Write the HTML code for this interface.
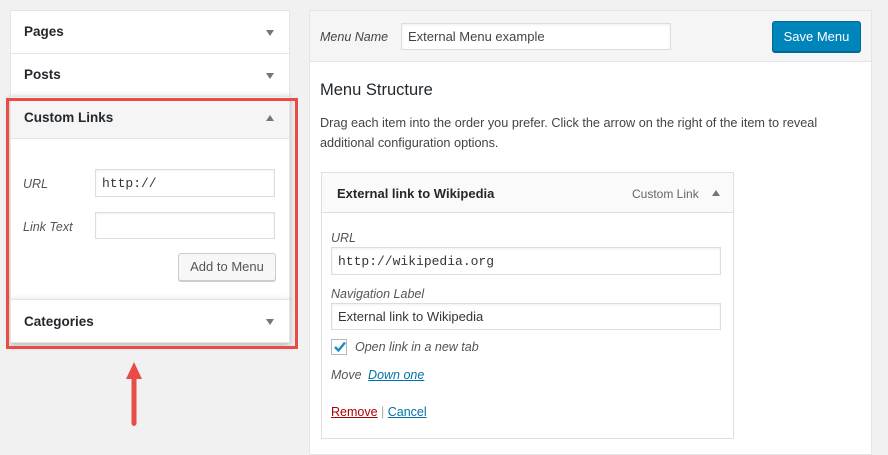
<!DOCTYPE html>
<html><head><meta charset="utf-8"><style>
*{box-sizing:border-box;margin:0;padding:0}
body{width:888px;height:445px;background:#f1f1f1;font-family:"Liberation Sans",sans-serif;color:#23282d;position:relative;overflow:hidden}
.a{position:absolute}
.box{background:#fff;border:1px solid #e5e5e5}
.h{font-size:13.5px;font-weight:bold;color:#23282d}
.tri{position:absolute;width:0;height:0;border-left:4px solid transparent;border-right:4px solid transparent}
.down{border-top:6px solid #72777c}
.up{border-bottom:6px solid #72777c}
.inp{position:absolute;background:#fff;border:1px solid #ddd;box-shadow:inset 0 1px 2px rgba(0,0,0,.07);font-size:13px;padding:0 6px;display:flex;align-items:center;color:#32373c}
.lbl{position:absolute;font-size:12.5px;font-style:italic;color:#555}
.mono{font-family:"Liberation Mono",monospace;font-size:13px}
</style></head><body>
<div class="a box" style="left:10px;top:10px;width:280px;height:44px"></div>
<div class="a h" style="left:24px;top:24px">Pages</div><div class="tri down" style="left:266px;top:30px"></div>
<div class="a box" style="left:10px;top:53px;width:280px;height:44px"></div>
<div class="a h" style="left:24px;top:67px">Posts</div><div class="tri down" style="left:266px;top:73px"></div>
<div class="a box" style="left:10px;top:96px;width:280px;height:205px;box-shadow:0 1px 6px rgba(0,0,0,.25)"></div>
<div class="a" style="left:11px;top:97px;width:278px;height:42px;background:#f5f5f5;border-bottom:1px solid #e5e5e5"></div>
<div class="a h" style="left:24px;top:110px">Custom Links</div><div class="tri up" style="left:266px;top:115px"></div>
<div class="lbl" style="left:23px;top:177px">URL</div>
<div class="inp mono" style="left:95px;top:169px;width:180px;height:28px">http://</div>
<div class="lbl" style="left:23px;top:220px">Link Text</div>
<div class="inp" style="left:95px;top:212px;width:180px;height:27px"></div>
<div class="a" style="left:178px;top:253px;width:98px;height:28px;background:#f7f7f7;border:1px solid #ccc;border-radius:3px;box-shadow:0 1px 0 #ccc;font-size:13px;color:#555;text-align:center;line-height:26px">Add to Menu</div>
<div class="a box" style="left:10px;top:299px;width:280px;height:44px;box-shadow:0 2px 6px rgba(0,0,0,.25)"></div>
<div class="a h" style="left:24px;top:314px">Categories</div><div class="tri down" style="left:266px;top:319px"></div>
<div class="a" style="left:6px;top:98px;width:292px;height:251px;border:3px solid #e94c47"></div>
<svg class="a" style="left:120px;top:358px" width="28" height="72"><path d="M14 4 L22 21 L16.5 21 L16.5 66 Q14 70 11.5 66 L11.5 21 L6 21 Z" fill="#e94c47"/></svg>
<div class="a box" style="left:309px;top:10px;width:563px;height:445px"></div>
<div class="a" style="left:310px;top:11px;width:561px;height:51px;background:#f5f5f5;border-bottom:1px solid #e5e5e5"></div>
<div class="lbl" style="left:320px;top:30px;color:#444">Menu Name</div>
<div class="inp" style="left:401px;top:23px;width:270px;height:27px;color:#444">External Menu example</div>
<div class="a" style="left:772px;top:21px;width:89px;height:31px;background:#0085ba;border:1px solid #006799;border-radius:3px;box-shadow:0 1px 0 #006799;color:#fff;font-size:13px;text-align:center;line-height:29px">Save Menu</div>
<div class="a" style="left:320px;top:81px;font-size:16.5px;color:#23282d">Menu Structure</div>
<div class="a" style="left:320px;top:114px;font-size:12.7px;line-height:19.5px;color:#444;width:540px">Drag each item into the order you prefer. Click the arrow on the right of the item to reveal additional configuration options.</div>
<div class="a box" style="left:321px;top:172px;width:413px;height:267px;border-color:#dfdfdf"></div>
<div class="a" style="left:322px;top:173px;width:411px;height:40px;background:#fafafa;border-bottom:1px solid #dfdfdf"></div>
<div class="a h" style="left:337px;top:186px;font-size:13px">External link to Wikipedia</div>
<div class="a" style="left:632px;top:187px;font-size:12px;color:#666">Custom Link</div>
<div class="tri up" style="left:712px;top:190px"></div>
<div class="lbl" style="left:331px;top:231px">URL</div>
<div class="inp mono" style="left:331px;top:247px;width:390px;height:28px">http://wikipedia.org</div>
<div class="lbl" style="left:331px;top:287px">Navigation Label</div>
<div class="inp" style="left:331px;top:303px;width:390px;height:27px">External link to Wikipedia</div>
<div class="a" style="left:331px;top:339px;width:16px;height:16px;border:1px solid #b4b9be;background:#fff"></div>
<svg class="a" style="left:332px;top:339px" width="16" height="16"><path d="M3 8 L6.5 11.5 L13 3.5" stroke="#1e8cbe" stroke-width="2.4" fill="none"/></svg>
<div class="lbl" style="left:355px;top:340px">Open link in a new tab</div>
<div class="lbl" style="left:331px;top:368px">Move <span style="color:#0073aa;text-decoration:underline;margin-left:3px">Down one</span></div>
<div class="a" style="left:331px;top:405px;font-size:12.5px;color:#aaa"><span style="color:#a00;text-decoration:underline">Remove</span> | <span style="color:#0073aa;text-decoration:underline">Cancel</span></div>
</body></html>
